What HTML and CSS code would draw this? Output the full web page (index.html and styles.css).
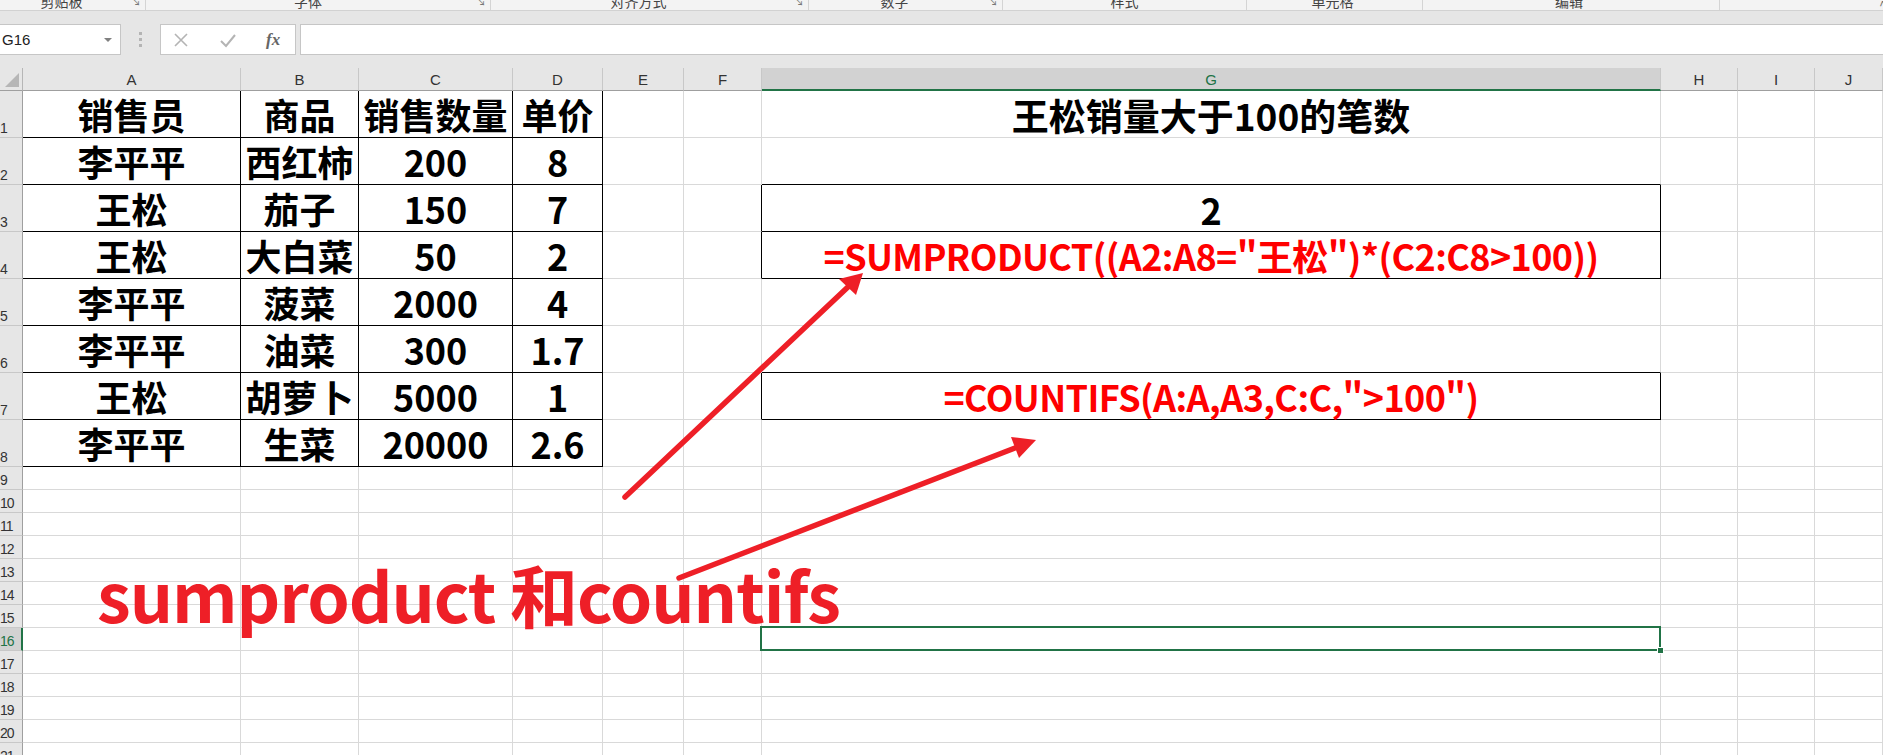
FILE: index.html
```html
<!DOCTYPE html>
<html lang="zh-CN">
<head>
<meta charset="utf-8">
<title>Excel</title>
<link rel="stylesheet" href="styles.css">
</head>
<body>
<div class="app">
  <div class="ribbon">
    <div class="grp g1"><span class="lbl">剪贴板</span><span class="launch">↘</span></div>
    <div class="grp g2"><span class="lbl">字体</span><span class="launch">↘</span></div>
    <div class="grp g3"><span class="lbl">对齐方式</span><span class="launch">↘</span></div>
    <div class="grp g4"><span class="lbl">数字</span><span class="launch">↘</span></div>
    <div class="grp g5"><span class="lbl">样式</span></div>
    <div class="grp g6"><span class="lbl">单元格</span></div>
    <div class="grp g7"><span class="lbl">编辑</span></div>
    <div class="grp g8"><span class="caret">^</span></div>
  </div>
  <div class="band"></div>
  <div class="fbar">
    <div class="namebox"><span class="ref">G16</span><span class="dd"></span></div>
    <div class="dots"><i></i><i></i><i></i></div>
    <div class="btns">
      <svg class="ico" width="18" height="18" viewBox="0 0 18 18"><path d="M3 3L15 15M15 3L3 15" stroke="#b4b4b4" stroke-width="1.6" fill="none"/></svg>
      <svg class="ico" width="18" height="18" viewBox="0 0 18 18"><path d="M2 10L7 15L16 4" stroke="#b4b4b4" stroke-width="2" fill="none"/></svg>
      <span class="fx">fx</span>
    </div>
    <div class="finput"></div>
  </div>
  <div class="band"></div>
  <div class="sheetwrap">
    <div class="sheet">
      <div class="row">
        <div class="corner"><span class="tri"></span></div>
        <div class="ch">A</div><div class="ch">B</div><div class="ch">C</div><div class="ch">D</div><div class="ch">E</div><div class="ch">F</div><div class="ch sel-col">G</div><div class="ch">H</div><div class="ch">I</div><div class="ch">J</div>
      </div>
      <div class="row big">
        <div class="rh">1</div>
        <div class="c t">销售员</div><div class="c t">商品</div><div class="c t">销售数量</div><div class="c t">单价</div><div class="c"></div><div class="c"></div><div class="c title">王松销量大于100的笔数</div><div class="c"></div><div class="c"></div><div class="c"></div>
      </div>
      <div class="row big">
        <div class="rh">2</div>
        <div class="c t">李平平</div><div class="c t">西红柿</div><div class="c t">200</div><div class="c t">8</div><div class="c"></div><div class="c"></div><div class="c bb"></div><div class="c"></div><div class="c"></div><div class="c"></div>
      </div>
      <div class="row big">
        <div class="rh">3</div>
        <div class="c t">王松</div><div class="c t">茄子</div><div class="c t">150</div><div class="c t">7</div><div class="c"></div><div class="c br"></div><div class="c box num">2</div><div class="c"></div><div class="c"></div><div class="c"></div>
      </div>
      <div class="row big">
        <div class="rh">4</div>
        <div class="c t">王松</div><div class="c t">大白菜</div><div class="c t">50</div><div class="c t">2</div><div class="c"></div><div class="c br"></div><div class="c box red">=SUMPRODUCT((A2:A8="王松")*(C2:C8&gt;100))</div><div class="c"></div><div class="c"></div><div class="c"></div>
      </div>
      <div class="row big">
        <div class="rh">5</div>
        <div class="c t">李平平</div><div class="c t">菠菜</div><div class="c t">2000</div><div class="c t">4</div><div class="c"></div><div class="c"></div><div class="c"></div><div class="c"></div><div class="c"></div><div class="c"></div>
      </div>
      <div class="row big">
        <div class="rh">6</div>
        <div class="c t">李平平</div><div class="c t">油菜</div><div class="c t">300</div><div class="c t">1.7</div><div class="c"></div><div class="c"></div><div class="c bb"></div><div class="c"></div><div class="c"></div><div class="c"></div>
      </div>
      <div class="row big">
        <div class="rh">7</div>
        <div class="c t">王松</div><div class="c t">胡萝卜</div><div class="c t">5000</div><div class="c t">1</div><div class="c"></div><div class="c br"></div><div class="c box red">=COUNTIFS(A:A,A3,C:C,"&gt;100")</div><div class="c"></div><div class="c"></div><div class="c"></div>
      </div>
      <div class="row big">
        <div class="rh">8</div>
        <div class="c t">李平平</div><div class="c t">生菜</div><div class="c t">20000</div><div class="c t">2.6</div><div class="c"></div><div class="c"></div><div class="c"></div><div class="c"></div><div class="c"></div><div class="c"></div>
      </div>
      <div class="row"><div class="rh">9</div><div class="c"></div><div class="c"></div><div class="c"></div><div class="c"></div><div class="c"></div><div class="c"></div><div class="c"></div><div class="c"></div><div class="c"></div><div class="c"></div></div>
      <div class="row"><div class="rh">10</div><div class="c"></div><div class="c"></div><div class="c"></div><div class="c"></div><div class="c"></div><div class="c"></div><div class="c"></div><div class="c"></div><div class="c"></div><div class="c"></div></div>
      <div class="row"><div class="rh">11</div><div class="c"></div><div class="c"></div><div class="c"></div><div class="c"></div><div class="c"></div><div class="c"></div><div class="c"></div><div class="c"></div><div class="c"></div><div class="c"></div></div>
      <div class="row"><div class="rh">12</div><div class="c"></div><div class="c"></div><div class="c"></div><div class="c"></div><div class="c"></div><div class="c"></div><div class="c"></div><div class="c"></div><div class="c"></div><div class="c"></div></div>
      <div class="row"><div class="rh">13</div><div class="c"></div><div class="c"></div><div class="c"></div><div class="c"></div><div class="c"></div><div class="c"></div><div class="c"></div><div class="c"></div><div class="c"></div><div class="c"></div></div>
      <div class="row"><div class="rh">14</div><div class="c"></div><div class="c"></div><div class="c"></div><div class="c"></div><div class="c"></div><div class="c"></div><div class="c"></div><div class="c"></div><div class="c"></div><div class="c"></div></div>
      <div class="row"><div class="rh">15</div><div class="c"></div><div class="c"></div><div class="c"></div><div class="c"></div><div class="c"></div><div class="c"></div><div class="c"></div><div class="c"></div><div class="c"></div><div class="c"></div></div>
      <div class="row"><div class="rh sel-row">16</div><div class="c"></div><div class="c"></div><div class="c"></div><div class="c"></div><div class="c"></div><div class="c"></div><div class="c active"><span class="handle"></span></div><div class="c"></div><div class="c"></div><div class="c"></div></div>
      <div class="row"><div class="rh">17</div><div class="c"></div><div class="c"></div><div class="c"></div><div class="c"></div><div class="c"></div><div class="c"></div><div class="c"></div><div class="c"></div><div class="c"></div><div class="c"></div></div>
      <div class="row"><div class="rh">18</div><div class="c"></div><div class="c"></div><div class="c"></div><div class="c"></div><div class="c"></div><div class="c"></div><div class="c"></div><div class="c"></div><div class="c"></div><div class="c"></div></div>
      <div class="row"><div class="rh">19</div><div class="c"></div><div class="c"></div><div class="c"></div><div class="c"></div><div class="c"></div><div class="c"></div><div class="c"></div><div class="c"></div><div class="c"></div><div class="c"></div></div>
      <div class="row"><div class="rh">20</div><div class="c"></div><div class="c"></div><div class="c"></div><div class="c"></div><div class="c"></div><div class="c"></div><div class="c"></div><div class="c"></div><div class="c"></div><div class="c"></div></div>
      <div class="row"><div class="rh">21</div><div class="c"></div><div class="c"></div><div class="c"></div><div class="c"></div><div class="c"></div><div class="c"></div><div class="c"></div><div class="c"></div><div class="c"></div><div class="c"></div></div>
    </div>
    <svg class="arrows" width="1883" height="700" viewBox="0 0 1883 700">
      <line x1="625" y1="429" x2="849" y2="218" stroke="#ee1f27" stroke-width="5.5" stroke-linecap="round"/>
      <polygon points="863,205 856,227 839,211" fill="#ee1f27"/>
      <line x1="679" y1="510" x2="1015" y2="380" stroke="#ee1f27" stroke-width="5.5" stroke-linecap="round"/>
      <polygon points="1036,372 1019,390 1011,369" fill="#ee1f27"/>
    </svg>
    <div class="note">sumproduct 和countifs</div>
  </div>
</div>
</body>
</html>
```

FILE: styles.css
```css
html, body {
  margin: 0;
  padding: 0;
  background: #ffffff;
  overflow: hidden;
}
.app {
  width: 1883px;
  height: 755px;
  overflow: hidden;
  font-family: "Noto Sans CJK SC", "Liberation Sans", sans-serif;
  background: #e6e6e6;
}
.ribbon {
  height: 10px;
  display: flex;
  background: #f3f3f3;
  border-bottom: 1px solid #d2d2d2;
  overflow: hidden;
}
.grp {
  position: relative;
  display: flex;
  justify-content: center;
  border-right: 1px solid #d4d4d4;
  box-sizing: border-box;
  height: 10px;
  overflow: hidden;
}
.lbl {
  font-size: 14px;
  line-height: 14px;
  color: #444;
  margin-top: -6px;
}
.launch {
  position: absolute;
  right: 4px;
  top: -6px;
  font-size: 11px;
  line-height: 14px;
  color: #777;
}
.caret {
  position: absolute;
  right: -3px;
  top: -4px;
  font-size: 12px;
  color: #666;
}
.g1 { width: 146px; padding-right: 22px; }
.g2 { width: 345px; padding-right: 20px; }
.g3 { width: 318px; padding-right: 22px; }
.g4 { width: 194px; padding-right: 22px; }
.g5 { width: 244px; }
.g6 { width: 176px; padding-right: 4px; }
.g7 { width: 297px; padding-right: 4px; }
.g8 { width: 163px; border-right: none; }
.band {
  height: 13px;
  background: #e6e6e6;
}
.fbar {
  height: 31px;
  display: flex;
  align-items: stretch;
  background: #e6e6e6;
}
.namebox {
  width: 121px;
  box-sizing: border-box;
  background: #fff;
  border: 1px solid #c6c6c6;
  border-left: none;
  display: flex;
  align-items: center;
  justify-content: space-between;
  padding: 0 8px 0 2px;
}
.ref {
  font-family: "Liberation Sans", sans-serif;
  font-size: 15px;
  color: #222;
}
.dd {
  width: 0;
  height: 0;
  border-left: 4px solid transparent;
  border-right: 4px solid transparent;
  border-top: 4px solid #808080;
}
.dots {
  width: 39px;
  display: flex;
  flex-direction: column;
  align-items: center;
  justify-content: center;
  gap: 3px;
}
.dots i {
  display: block;
  width: 3px;
  height: 3px;
  background: #b4b4b4;
}
.btns {
  width: 136px;
  box-sizing: border-box;
  background: #fff;
  border: 1px solid #c6c6c6;
  display: flex;
  align-items: center;
  padding-left: 11px;
  gap: 29px;
}
.fx {
  font-family: "Liberation Serif", serif;
  font-style: italic;
  font-weight: bold;
  font-size: 17px;
  color: #666;
}
.finput {
  flex: 1;
  margin-left: 4px;
  background: #fff;
  border: 1px solid #c6c6c6;
  border-right: none;
}
.sheetwrap {
  position: relative;
  background: #fff;
}
.sheet {
  display: grid;
  grid-template-columns: 23px 218px 118px 154px 90px 81px 78px 899px 77px 77px 68px;
  grid-template-rows: 23px repeat(8, 47px) repeat(13, 23px);
}
.row { display: contents; }
.corner {
  position: relative;
  background: #e6e6e6;
  border-right: 1px solid #b6b6b6;
  border-bottom: 1px solid #9f9f9f;
  box-sizing: border-box;
}
.tri {
  position: absolute;
  right: 3px;
  bottom: 3px;
  width: 0;
  height: 0;
  border-left: 14px solid transparent;
  border-bottom: 14px solid #b6b6b6;
}
.ch {
  background: #e6e6e6;
  border-right: 1px solid #c8c8c8;
  border-bottom: 1px solid #9f9f9f;
  box-sizing: border-box;
  font-family: "Liberation Sans", sans-serif;
  font-size: 15px;
  color: #333;
  display: flex;
  align-items: center;
  justify-content: center;
  padding-top: 1px;
}
.ch.sel-col {
  background: #d2d2d2;
  color: #217346;
  border-bottom: 2px solid #217346;
}
.rh {
  background: #e6e6e6;
  border-right: 1px solid #9f9f9f;
  border-bottom: 1px solid #c8c8c8;
  box-sizing: border-box;
  font-family: "Liberation Sans", sans-serif;
  font-size: 14px;
  letter-spacing: -1px;
  color: #333;
  display: flex;
  align-items: flex-end;
  padding: 0 0 2px 0;
  line-height: 1;
}
.rh.sel-row {
  background: #d2d2d2;
  color: #217346;
  border-right: 2px solid #217346;
}
.c {
  border-right: 1px solid #d9d9d9;
  border-bottom: 1px solid #d9d9d9;
  box-sizing: border-box;
  display: flex;
  align-items: center;
  justify-content: center;
  white-space: nowrap;
  color: #000;
  font-weight: bold;
  font-size: 36px;
  line-height: 1;
  position: relative;
}
.c.t {
  border-right-color: #000;
  border-bottom-color: #000;
}
.c.bb { border-bottom-color: #000; }
.c.br { border-right-color: #000; }
.c.box {
  border-right-color: #000;
  border-bottom-color: #000;
}
.title {
  font-size: 37px;
  padding-top: 2px;
}
.num { padding-top: 2px; }
.red {
  color: #ff0000;
  font-size: 36px;
  font-weight: bold;
  letter-spacing: -0.6px;
}
.active::after {
  content: "";
  position: absolute;
  left: -2px;
  top: -2px;
  right: -1px;
  bottom: -1px;
  border: 2px solid #217346;
}
.handle {
  position: absolute;
  right: -4px;
  bottom: -4px;
  width: 5px;
  height: 5px;
  background: #217346;
  border: 1px solid #fff;
  z-index: 2;
}
.arrows {
  position: absolute;
  left: 0;
  top: 0;
  pointer-events: none;
}
.note {
  position: absolute;
  left: 97px;
  top: 492px;
  font-family: "Noto Sans CJK SC", sans-serif;
  font-weight: bold;
  font-size: 68px;
  line-height: 1;
  color: #ee1f27;
  letter-spacing: -1px;
  white-space: nowrap;
}
```
